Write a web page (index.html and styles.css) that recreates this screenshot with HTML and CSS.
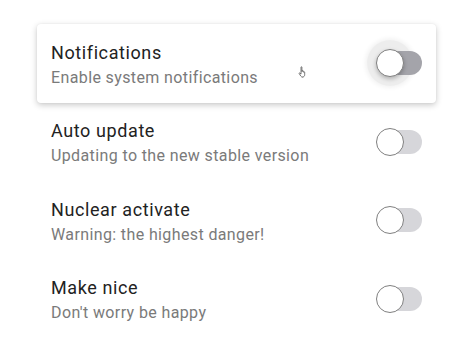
FILE: index.html
```html
<!DOCTYPE html>
<html>
<head>
<meta charset="utf-8">
<link rel="stylesheet" href="styles.css">
</head>
<body>
<div class="list">
  <div class="row card">
    <div class="text">
      <div class="title">Notifications</div>
      <div class="sub">Enable system notifications</div>
    </div>
    <svg class="cursor" width="10" height="12" viewBox="0 0 10 12"><path d="M3 1.2c0-.6.9-.6.9 0V5.5l.1-.6c0-.6.9-.6.9 0v.8c0-.6.9-.6.9 0v.7c0-.6.9-.6.9 0v2.4c0 1.3-1 2.3-2.3 2.3H4.6c-.8 0-1.4-.4-1.8-1L1.2 7.6c-.3-.5.3-1 .7-.6L3 8.1z" fill="#fff" stroke="#555" stroke-width="0.8" stroke-linejoin="round"/></svg>
    <div class="toggle hover">
      <span class="halo"></span>
      <span class="track"></span>
      <span class="thumb"></span>
    </div>
  </div>
  <div class="row">
    <div class="text">
      <div class="title">Auto update</div>
      <div class="sub">Updating to the new stable version</div>
    </div>
    <div class="toggle">
      <span class="track"></span>
      <span class="thumb"></span>
    </div>
  </div>
  <div class="row">
    <div class="text">
      <div class="title">Nuclear activate</div>
      <div class="sub">Warning: the highest danger!</div>
    </div>
    <div class="toggle">
      <span class="track"></span>
      <span class="thumb"></span>
    </div>
  </div>
  <div class="row">
    <div class="text">
      <div class="title">Make nice</div>
      <div class="sub">Don't worry be happy</div>
    </div>
    <div class="toggle">
      <span class="track"></span>
      <span class="thumb"></span>
    </div>
  </div>
</div>
</body>
</html>
```
FILE: styles.css
```css
html, body {
  margin: 0;
  padding: 0;
  background: #fff;
}
body {
  font-family: Roboto, "Noto Sans", sans-serif;
  padding: 24px 38px 0 37px;
}
.list {
  display: flex;
  flex-direction: column;
}
.row {
  position: relative;
  height: 78.5px;
  display: flex;
  align-items: center;
  justify-content: space-between;
  padding: 0 14px;
  box-sizing: border-box;
}
.card {
  border-radius: 4px;
  box-shadow: 0 2px 6px rgba(0,0,0,0.22), 0 0 2px rgba(0,0,0,0.06);
}
.text {
  padding-top: 3px;
}
.title {
  font-size: 18px;
  line-height: 25px;
  color: #222;
  letter-spacing: 0.6px;
}
.sub {
  font-size: 16px;
  line-height: 25px;
  color: #7a7a7a;
  letter-spacing: 0.38px;
}
.toggle {
  position: relative;
  width: 46px;
  height: 28px;
}
.track {
  position: absolute;
  left: 4px;
  right: 0;
  top: 2px;
  height: 24px;
  border-radius: 12px;
  background: #d6d6da;
}
.hover .track {
  background: #a4a4aa;
}
.thumb {
  position: absolute;
  left: 0;
  top: 0;
  width: 28px;
  height: 28px;
  box-sizing: border-box;
  border-radius: 50%;
  background: #fff;
  border: 1.5px solid #808080;
}
.hover .thumb {
  box-shadow: 0 2px 4px rgba(0,0,0,0.25);
}
.halo {
  position: absolute;
  left: -9px;
  top: -9px;
  width: 46px;
  height: 46px;
  border-radius: 50%;
  background: rgba(0,0,0,0.07);
  box-shadow: 0 0 4px 2px rgba(0,0,0,0.05);
}
.cursor {
  position: absolute;
  left: 261px;
  top: 42px;
}
```
